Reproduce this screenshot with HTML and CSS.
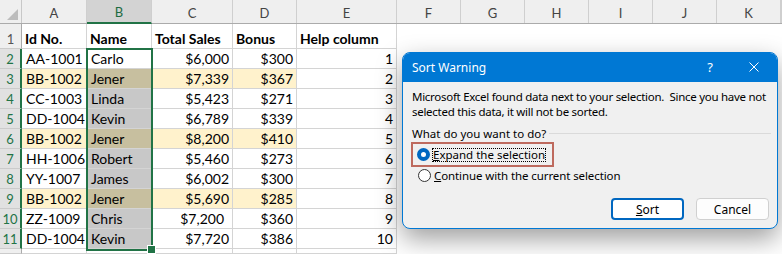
FILE: index.html
```html
<!DOCTYPE html>
<html lang="en">
<head>
  <meta charset="UTF-8">
  <title>Sort Warning</title>
  <link rel="stylesheet" href="styles.css">
</head>
<body>
  <div class="sheet">
    <div class="row head">
      <div class="corner"><span class="tri"></span></div>
      <div class="col">A</div>
      <div class="col active">B</div>
      <div class="col">C</div>
      <div class="col">D</div>
      <div class="col">E</div>
      <div class="col">F</div>
      <div class="col">G</div>
      <div class="col">H</div>
      <div class="col">I</div>
      <div class="col">J</div>
      <div class="col">K</div>
      <div class="col"></div>
    </div>
    <div class="row first">
      <div class="rh plain">1</div>
      <div class="c bold">Id No.</div>
      <div class="c bold">Name</div>
      <div class="c bold">Total Sales</div>
      <div class="c bold">Bonus</div>
      <div class="c bold">Help column</div>
      <div class="blank"></div>
    </div>
    <div class="row">
      <div class="rh">2</div>
      <div class="c">AA-1001</div>
      <div class="c">Carlo</div>
      <div class="c num">$6,000</div>
      <div class="c num">$300</div>
      <div class="c num">1</div>
      <div class="blank"></div>
    </div>
    <div class="row hl">
      <div class="rh">3</div>
      <div class="c">BB-1002</div>
      <div class="c sel">Jener</div>
      <div class="c num">$7,339</div>
      <div class="c num">$367</div>
      <div class="c num">2</div>
      <div class="blank"></div>
    </div>
    <div class="row">
      <div class="rh">4</div>
      <div class="c">CC-1003</div>
      <div class="c sel">Linda</div>
      <div class="c num">$5,423</div>
      <div class="c num">$271</div>
      <div class="c num">3</div>
      <div class="blank"></div>
    </div>
    <div class="row">
      <div class="rh">5</div>
      <div class="c">DD-1004</div>
      <div class="c sel">Kevin</div>
      <div class="c num">$6,789</div>
      <div class="c num">$339</div>
      <div class="c num">4</div>
      <div class="blank"></div>
    </div>
    <div class="row hl">
      <div class="rh">6</div>
      <div class="c">BB-1002</div>
      <div class="c sel">Jener</div>
      <div class="c num">$8,200</div>
      <div class="c num">$410</div>
      <div class="c num">5</div>
      <div class="blank"></div>
    </div>
    <div class="row">
      <div class="rh">7</div>
      <div class="c">HH-1006</div>
      <div class="c sel">Robert</div>
      <div class="c num">$5,460</div>
      <div class="c num">$273</div>
      <div class="c num">6</div>
      <div class="blank"></div>
    </div>
    <div class="row">
      <div class="rh">8</div>
      <div class="c">YY-1007</div>
      <div class="c sel">James</div>
      <div class="c num">$6,002</div>
      <div class="c num">$300</div>
      <div class="c num">7</div>
      <div class="blank"></div>
    </div>
    <div class="row hl">
      <div class="rh">9</div>
      <div class="c">BB-1002</div>
      <div class="c sel">Jener</div>
      <div class="c num">$5,690</div>
      <div class="c num">$285</div>
      <div class="c num">8</div>
      <div class="blank"></div>
    </div>
    <div class="row">
      <div class="rh">10</div>
      <div class="c">ZZ-1009</div>
      <div class="c sel">Chris</div>
      <div class="c num pad">$7,200</div>
      <div class="c num">$360</div>
      <div class="c num">9</div>
      <div class="blank"></div>
    </div>
    <div class="row">
      <div class="rh">11</div>
      <div class="c">DD-1004</div>
      <div class="c sel">Kevin</div>
      <div class="c num">$7,720</div>
      <div class="c num">$386</div>
      <div class="c num">10</div>
      <div class="blank"></div>
    </div>
    <div class="row last">
      <div class="rh plain"></div>
      <div class="c"></div>
      <div class="c"></div>
      <div class="c"></div>
      <div class="c"></div>
      <div class="c"></div>
      <div class="blank"></div>
    </div>
    <div class="selection"></div>
  </div>

  <div class="dialog">
    <div class="titlebar">
      <span class="title">Sort Warning</span>
      <span class="help">?</span>
      <svg class="close" width="10" height="10" viewBox="0 0 10 10">
        <path d="M0.5 0.5 L9.5 9.5 M9.5 0.5 L0.5 9.5" stroke="#fff" stroke-width="1"/>
      </svg>
    </div>
    <div class="body">
      <p class="msg">Microsoft Excel found data next to your selection.&nbsp; Since you have not<br>selected this data, it will not be sorted.</p>
      <div class="group">What do you want to do?</div>
      <div class="mark">
        <label class="option">
          <span class="radio on"></span>
          <span class="focus"><u>E</u>xpand the selection</span>
        </label>
      </div>
      <label class="option second">
        <span class="radio"></span>
        <span><u>C</u>ontinue with the current selection</span>
      </label>
      <div class="buttons">
        <button class="btn primary"><u>S</u>ort</button>
        <button class="btn">Cancel</button>
      </div>
    </div>
  </div>
</body>
</html>
```

FILE: styles.css
```css
* {
  box-sizing: border-box;
}
body {
  margin: 0;
  height: 254px;
  background: #fff;
  overflow: hidden;
  font-family: Lato, 'Liberation Sans', sans-serif;
  font-size: 14px;
  color: #000;
}
.sheet {
  position: relative;
  width: 782px;
}
.row {
  display: grid;
  grid-template-columns: 22px 65px 65px 81px 64px 100px repeat(6, 64px) 1fr;
  height: 20px;
}
.row.head {
  height: 24px;
  background: #efefef;
  border-bottom: 1px solid #ababab;
}
.row.first {
  height: 25px;
}
.row.last {
  height: 5px;
}
.corner {
  border-right: 1px solid #c8c8c8;
  position: relative;
}
.tri {
  position: absolute;
  right: 3px;
  bottom: 3px;
  width: 11px;
  height: 11px;
  background: #bdbdbd;
  clip-path: polygon(100% 0, 100% 100%, 0 100%);
}
.col {
  border-right: 1px solid #cfcfcf;
  color: #444;
  font-size: 13px;
  display: flex;
  align-items: center;
  justify-content: center;
  padding-top: 2px;
}
.col.active {
  background: #d3d3d3;
  color: #1e6b41;
  border-bottom: 2px solid #217346;
  margin-bottom: -1px;
}
.rh {
  background: #e1e1e1;
  color: #217346;
  font-size: 13px;
  border-bottom: 1px solid #cbcbcb;
  border-right: 2px solid #217346;
  display: flex;
  align-items: flex-end;
  justify-content: center;
  padding-bottom: 1px;
}
.rh.plain {
  background: #efefef;
  color: #555;
  border-right: 1px solid #ababab;
}
.c {
  border-right: 1px solid #d4d4d4;
  border-bottom: 1px solid #d4d4d4;
  display: flex;
  align-items: flex-end;
  padding: 0 3px 1px 4px;
  white-space: nowrap;
  overflow: visible;
}
.c.bold {
  font-weight: bold;
  padding-left: 3px;
}
.c.num {
  justify-content: flex-end;
}
.c.pad {
  padding-right: 8px;
}
.hl .c:nth-child(-n+5) {
  background: #fff2cc;
}
.c.sel {
  background: #c8c8c8;
}
.hl .c.sel {
  background: #c7bf9f;
}
.blank {
  grid-column: 7 / -1;
}
.selection {
  position: absolute;
  left: 86px;
  top: 48px;
  width: 67px;
  height: 203px;
  border: 2px solid #217346;
}
.selection::after {
  content: '';
  position: absolute;
  right: -5px;
  bottom: -5px;
  width: 7px;
  height: 7px;
  background: #217346;
  border: 1px solid #fff;
}

/* dialog */
.dialog {
  position: absolute;
  left: 402px;
  top: 52px;
  width: 376px;
  height: 177px;
  background: #f0f0f0;
  border: 1px solid #0078d4;
  border-radius: 8px;
  box-shadow: 0 10px 26px rgba(0, 0, 0, 0.38);
  overflow: hidden;
  font-family: 'Noto Sans', 'Liberation Sans', sans-serif;
  font-size: 11.5px;
  color: #000;
}
.titlebar {
  height: 30px;
  margin: -1px -1px 0;
  background: #0078d4;
  color: #fff;
  display: flex;
  align-items: center;
  padding: 0 19px 0 10px;
}
.title {
  flex: 1;
  font-size: 12px;
}
.help {
  font-size: 13px;
  margin-right: 36px;
}
.body {
  padding: 7px 8px 0 9px;
}
.msg {
  margin: 0 -6px 0 0;
  line-height: 15px;
  letter-spacing: -0.28px;
  white-space: nowrap;
}
.group {
  margin-top: 7px;
  line-height: 15px;
  display: flex;
  align-items: center;
  gap: 3px;
  margin-right: -2px;
}
.group::after {
  content: '';
  flex: 1;
  border-top: 1px solid #dadada;
}
.mark {
  width: 143px;
  height: 25px;
  margin-left: -1px;
  margin-top: 1px;
  border: 2px solid #be6a5e;
  display: flex;
  align-items: center;
  padding-left: 4px;
}
.option {
  display: flex;
  align-items: center;
  gap: 3px;
  height: 18px;
}
.option.second {
  margin-left: 6px;
  margin-top: -1px;
  letter-spacing: -0.1px;
}
.radio {
  width: 13px;
  height: 13px;
  border-radius: 50%;
  border: 1px solid #333;
  background: #fff;
}
.radio.on {
  border: 4px solid #0067c0;
  background: #fff;
}
.focus {
  outline: 1px dotted #000;
  outline-offset: 0;
  line-height: 12px;
}
.buttons {
  display: flex;
  justify-content: flex-end;
  gap: 12px;
  margin-top: 14px;
}
.btn {
  width: 73px;
  height: 22px;
  font-family: inherit;
  font-size: 12px;
  background: #fdfdfd;
  border: 1px solid #d0d0d0;
  border-radius: 4px;
  padding: 0;
  color: #000;
}
.btn.primary {
  border: 2px solid #0067c0;
  background: #fff;
}
```
